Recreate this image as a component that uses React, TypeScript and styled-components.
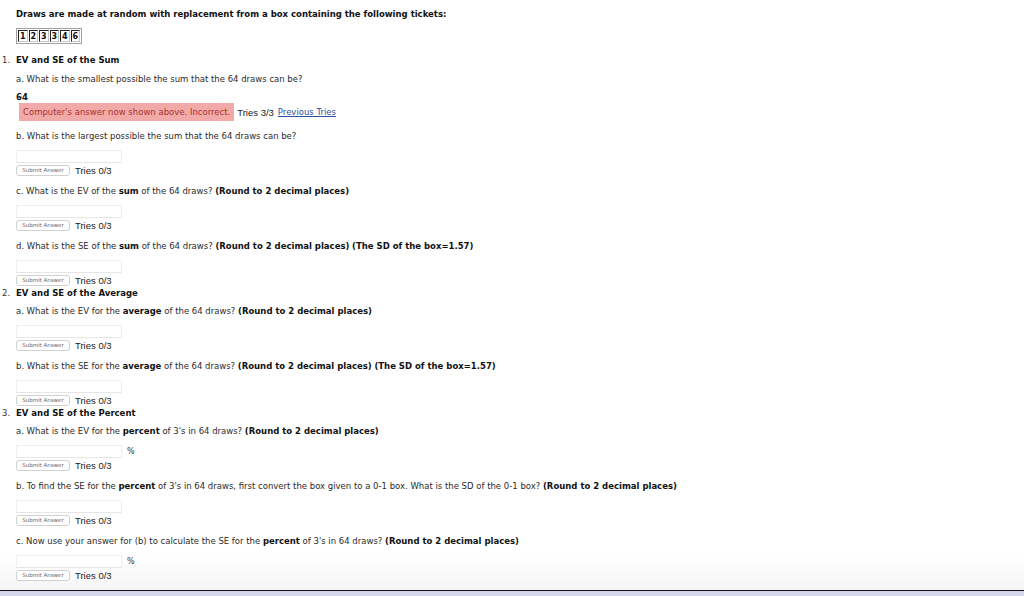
import * as React from "react";
import styled, { createGlobalStyle } from "styled-components";

const COLORS = {
  text: "#2b2b2b",
  strong: "#111",
  feedbackBg: "#f2aaa8",
  feedbackText: "#a8332f",
  link: "#2d4f9e",
  field: "#e6e6e6",
  bottomBar: "#d5d7ea",
};

const FONT = `"DejaVu Sans", Verdana, sans-serif`;

const GlobalStyle = createGlobalStyle`
  html, body {
    margin: 0;
    padding: 0;
    background: #fff;
  }
  body {
    font-family: ${FONT};
    color: ${COLORS.text};
  }
`;

const Page = styled.div`
  display: flex;
  flex-direction: column;
  height: 596px;
  overflow: hidden;
`;

const Content = styled.div`
  flex: 1;
  padding: 7px 0 0 16px;
  background: linear-gradient(to bottom, #fff 0, #fff 555px, #f5f5f5 100%);
  overflow: hidden;
`;

const BottomBar = styled.div`
  height: 5px;
  border-top: 1px solid #111;
  background: ${COLORS.bottomBar};
`;

const Title = styled.div`
  font-weight: bold;
  font-size: 8.5px;
  line-height: 14px;
  color: ${COLORS.strong};
`;

const Tickets = styled.div`
  display: inline-flex;
  gap: 1px;
  margin-top: 7px;
  padding: 1px;
  border: 1px solid #a0a0a0;
`;

const Ticket = styled.span`
  width: 7.5px;
  height: 10px;
  display: flex;
  align-items: center;
  justify-content: center;
  border: 1px solid;
  border-color: #222 #c4c4c4 #c4c4c4 #222;
  font-weight: bold;
  font-size: 8px;
  color: ${COLORS.strong};
`;

const SectionHeading = styled.div<{ $first?: boolean }>`
  display: flex;
  margin-top: ${(p) => (p.$first ? "9px" : "0")};
  font-weight: bold;
  font-size: 8.5px;
  line-height: 14px;
  color: ${COLORS.strong};
`;

const Num = styled.span`
  width: 14px;
  margin-left: -14px;
  font-weight: normal;
  color: #333;
`;

const Question = styled.div<{ $gap: number }>`
  margin-top: ${(p) => p.$gap}px;
  font-size: 8.5px;
  line-height: 14px;
  white-space: nowrap;

  b {
    color: ${COLORS.strong};
  }
`;

const GivenAnswer = styled.div`
  margin-top: 5px;
  font-weight: bold;
  font-size: 8.5px;
  line-height: 12px;
  color: ${COLORS.strong};
`;

const FeedbackRow = styled.div`
  display: flex;
  align-items: center;
  height: 18px;
  margin-left: 3px;
`;

const Feedback = styled.span`
  height: 18px;
  line-height: 18px;
  padding: 0 4px;
  background: ${COLORS.feedbackBg};
  color: ${COLORS.feedbackText};
  font-size: 8.5px;
`;

const Tries = styled.span<{ $tight?: boolean }>`
  margin-left: ${(p) => (p.$tight ? "3px" : "5px")};
  font-family: "Liberation Sans", Arial, sans-serif;
  font-size: 9.5px;
  color: #222;
`;

const TriesLink = styled.a`
  margin-left: 4px;
  font-size: 8.5px;
  color: ${COLORS.link};
  text-decoration: underline;
`;

const InputRow = styled.div`
  display: flex;
  align-items: center;
  margin-top: 7px;
  height: 13px;
`;

const AnswerInput = styled.input`
  box-sizing: border-box;
  width: 106px;
  height: 13px;
  margin: 0;
  padding: 0 2px;
  border: 1px solid #f0f0f0;
  border-bottom-color: ${COLORS.field};
  outline: none;
  background: #fff;
`;

const Unit = styled.span`
  margin-left: 5px;
  font-size: 8px;
  color: #333;
`;

const SubmitRow = styled.div`
  display: flex;
  align-items: center;
  margin-top: 1px;
  height: 12px;
`;

const SubmitButton = styled.button`
  box-sizing: border-box;
  width: 54px;
  height: 11px;
  padding: 0;
  margin: 0;
  border: 1px solid #d0d0d0;
  border-radius: 3px;
  background: #fff;
  font-family: ${FONT};
  font-size: 5.5px;
  color: #666;
  line-height: 9px;
`;

interface QuestionItem {
  text: React.ReactNode;
  unit?: string;
}

interface Section {
  title: string;
  questions: QuestionItem[];
}

const SECTIONS: Section[] = [
  {
    title: "EV and SE of the Sum",
    questions: [
      {
        text: (
          <>
            c. What is the EV of the <b>sum</b> of the 64 draws? <b>(Round to 2 decimal places)</b>
          </>
        ),
      },
      {
        text: (
          <>
            d. What is the SE of the <b>sum</b> of the 64 draws? <b>(Round to 2 decimal places)</b>{" "}
            <b>(The SD of the box=1.57)</b>
          </>
        ),
      },
    ],
  },
  {
    title: "EV and SE of the Average",
    questions: [
      {
        text: (
          <>
            a. What is the EV for the <b>average</b> of the 64 draws? <b>(Round to 2 decimal places)</b>
          </>
        ),
      },
      {
        text: (
          <>
            b. What is the SE for the <b>average</b> of the 64 draws? <b>(Round to 2 decimal places)</b>{" "}
            <b>(The SD of the box=1.57)</b>
          </>
        ),
      },
    ],
  },
  {
    title: "EV and SE of the Percent",
    questions: [
      {
        text: (
          <>
            a. What is the EV for the <b>percent</b> of 3's in 64 draws? <b>(Round to 2 decimal places)</b>
          </>
        ),
        unit: "%",
      },
      {
        text: (
          <>
            b. To find the SE for the <b>percent</b> of 3's in 64 draws, first convert the box given to a 0-1
            box. What is the SD of the 0-1 box? <b>(Round to 2 decimal places)</b>
          </>
        ),
      },
      {
        text: (
          <>
            c. Now use your answer for (b) to calculate the SE for the <b>percent</b> of 3's in 64 draws?{" "}
            <b>(Round to 2 decimal places)</b>
          </>
        ),
        unit: "%",
      },
    ],
  },
];

const TICKETS = [1, 2, 3, 3, 4, 6];

const AnswerBlock = ({ q, gap }: { q: QuestionItem; gap: number }) => (
  <>
    <Question $gap={gap}>{q.text}</Question>
    <InputRow>
      <AnswerInput type="text" />
      {q.unit && <Unit>{q.unit}</Unit>}
    </InputRow>
    <SubmitRow>
      <SubmitButton type="button">Submit Answer</SubmitButton>
      <Tries>Tries 0/3</Tries>
    </SubmitRow>
  </>
);

export default function App() {
  return (
    <Page>
      <GlobalStyle />
      <Content>
        <Title>Draws are made at random with replacement from a box containing the following tickets:</Title>
        <Tickets>
          {TICKETS.map((t, i) => (
            <Ticket key={i}>{t}</Ticket>
          ))}
        </Tickets>

        <SectionHeading $first>
          <Num>1.</Num>EV and SE of the Sum
        </SectionHeading>
        <Question $gap={5}>a. What is the smallest possible the sum that the 64 draws can be?</Question>
        <GivenAnswer>64</GivenAnswer>
        <FeedbackRow>
          <Feedback>Computer's answer now shown above. Incorrect.</Feedback>
          <Tries $tight>Tries 3/3</Tries>
          <TriesLink href="#">Previous Tries</TriesLink>
        </FeedbackRow>
        <AnswerBlock q={{ text: "b. What is the largest possible the sum that the 64 draws can be?" }} gap={8} />

        {SECTIONS.map((section, si) => (
          <React.Fragment key={si}>
            {si > 0 && (
              <SectionHeading>
                <Num>{si + 1}.</Num>
                {section.title}
              </SectionHeading>
            )}
            {section.questions.map((q, qi) => (
              <AnswerBlock key={qi} q={q} gap={si > 0 && qi === 0 ? 4 : 8} />
            ))}
          </React.Fragment>
        ))}
      </Content>
      <BottomBar />
    </Page>
  );
}
